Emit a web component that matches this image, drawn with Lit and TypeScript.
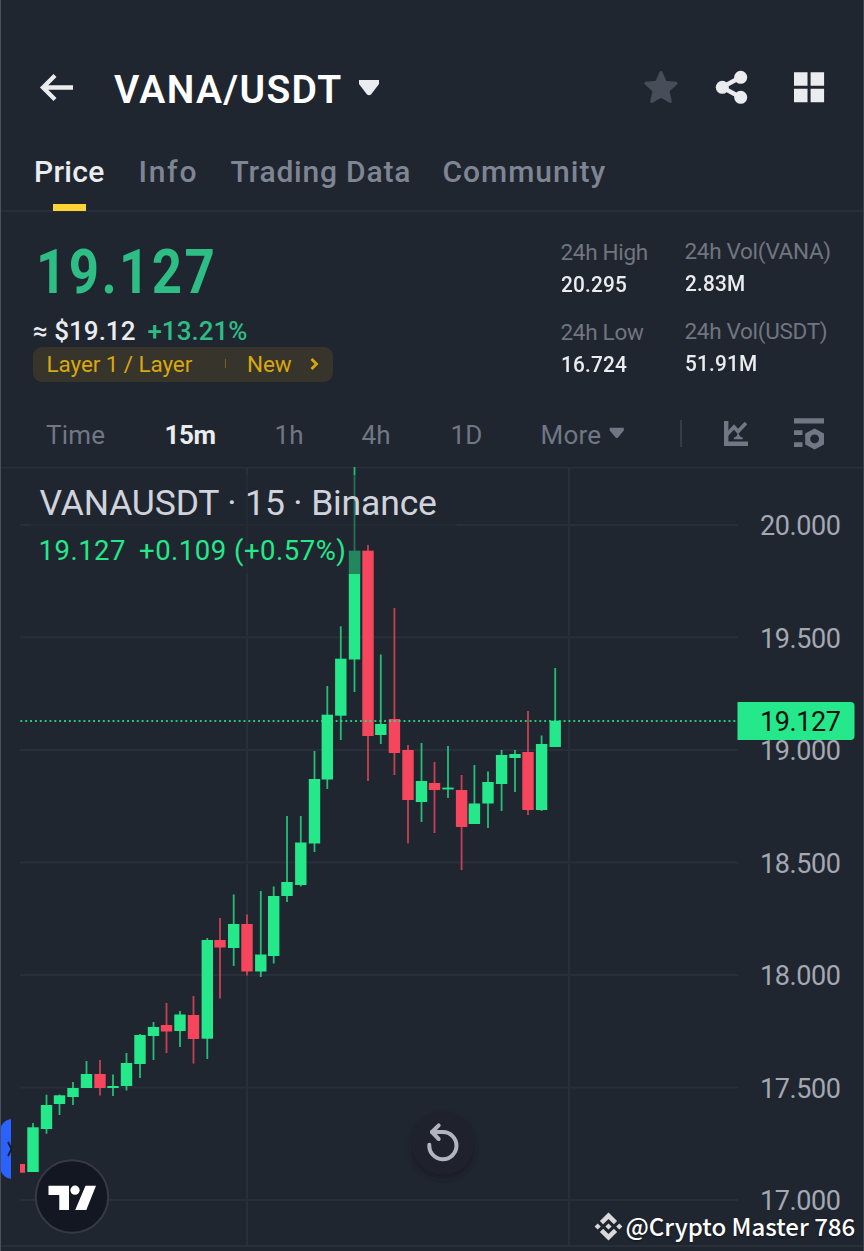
import { LitElement, html, svg, css } from "lit";
import { customElement } from "lit/decorators.js";

type Candle = [x: number, high: number, top: number, bottom: number, low: number, up: 0 | 1];

const CANDLES: Candle[] = [
  [33, 1123, 1127.3, 1172, 1172, 1],
  [46.5, 1094.7, 1105, 1129, 1133.7, 1],
  [59.5, 1094.5, 1095.3, 1104, 1115, 1],
  [73, 1082, 1088, 1097, 1105, 1],
  [86.5, 1061, 1074, 1088, 1088, 1],
  [100, 1060, 1074, 1088, 1095.5, 0],
  [113, 1074.5, 1086, 1088, 1096, 1],
  [126.5, 1053, 1063, 1086, 1090.5, 1],
  [140, 1034, 1035, 1064, 1078, 1],
  [153.5, 1022, 1027, 1036, 1060, 1],
  [166.5, 1003, 1025, 1031.5, 1053, 0],
  [180, 1011, 1014.5, 1031, 1047, 1],
  [193.5, 996, 1015, 1039, 1063.5, 0],
  [207.3, 938, 940, 1038.7, 1059, 1],
  [220, 918, 940, 947.5, 998.5, 0],
  [233.7, 894.5, 924, 948, 966, 1],
  [247, 914.5, 924, 971.5, 975.5, 0],
  [260.8, 891, 954.5, 971.5, 977, 1],
  [273.7, 886.5, 896, 956, 963.5, 1],
  [287, 816, 882, 896, 902, 1],
  [300.8, 816, 842.5, 885, 886.5, 1],
  [314.5, 751, 779, 843.5, 852, 1],
  [327.3, 686, 714.7, 779.5, 789, 1],
  [340.8, 626.3, 658.7, 715.7, 740, 1],
  [354.5, 466, 550.7, 659.5, 692, 1],
  [368, 545, 550.7, 736, 781, 0],
  [380.8, 654.5, 724, 735, 744, 1],
  [394.4, 608, 719, 753, 775, 0],
  [408, 745, 750, 800, 843.5, 0],
  [421.5, 743, 781, 802, 822, 1],
  [434.5, 762, 783, 790, 833, 0],
  [448, 746, 787.6, 789.4, 798, 1],
  [461.6, 775, 790, 827, 870, 0],
  [474.4, 765, 803.5, 824, 824, 1],
  [488, 771.5, 782, 803.5, 828, 1],
  [501.6, 750, 755, 784, 811, 1],
  [515, 750, 754, 758, 792, 1],
  [528, 711, 752, 810, 815, 0],
  [541.6, 735.5, 744, 810, 811, 1],
  [555.2, 668, 720.7, 747, 747, 1],
];

const LEVELS: [string, number][] = [
  ["20.000", 525],
  ["19.500", 637.3],
  ["19.000", 750],
  ["18.500", 862.5],
  ["18.000", 975],
  ["17.500", 1087.5],
  ["17.000", 1200],
];

const UP = "#25e88a";
const DOWN = "#f6465d";

@customElement("price-chart")
export class PriceChart extends LitElement {
  static styles = css`
    :host { display: block; position: relative; height: 784px; font-family: Roboto, sans-serif; }
    .plot { display: block; }
    .grid { stroke: #292f39; stroke-width: 2; }
    .axis { font-size: 27px; fill: #a5a8b3; }
    .last { font-size: 27px; fill: #0b1210; }
    .legend { position: absolute; left: 30px; top: 8px; }
    .veil { background: rgba(32, 38, 48, 0.5); white-space: pre; width: max-content; }
    .name { height: 57px; line-height: 56px; font-size: 35.5px; color: #d1d3dc; padding: 0 20px 0 9.5px; letter-spacing: -0.15px; }
    .veil.vals { height: 42px; line-height: 38px; font-size: 27.5px; color: #25e88a; width: 321px; padding-left: 8.5px; display: flex; gap: 13px; letter-spacing: 0.5px; }
    .drawer { position: absolute; left: 0; top: 652px; }
    .tv { position: absolute; left: 34px; top: 692px; }
    .reset { position: absolute; left: 403px; top: 637px; }
  `;

  private candle([x, high, top, bottom, low, up]: Candle) {
    const c = up ? UP : DOWN;
    return svg`
      <rect x=${x - 0.9} y=${high} width="1.8" height=${low - high} fill=${c} opacity="0.78"/>
      <rect x=${x - 5.7} y=${top} width="11.4" height=${bottom - top} fill=${c}/>`;
  }

  render() {
    return html`
      <svg class="plot" width="864" height="784" viewBox="0 467 864 784">
        <path class="grid" d="M0 467.5H864M0 1246H864M247 467V1245M569 467V1245"/>
        ${LEVELS.map(([, y]) => svg`<path class="grid" d="M20 ${y}H738"/>`)}
        <rect x="20" y="1164" width="5" height="8.7" fill=${DOWN}/>
        ${CANDLES.map((c) => this.candle(c))}
        <path d="M20.4 721H738" stroke=${UP} stroke-width="1.8" stroke-dasharray="1.9 2.95" opacity="0.85"/>
        ${LEVELS.map(([t, y]) => svg`<text class="axis" x="760" y=${y + 10.2} textLength="81">${t}</text>`)}
        <path d="M737.5 702H850.5a4 4 0 0 1 4 4V736a4 4 0 0 1-4 4H737.5Z" fill=${UP}/>
        <text class="last" x="760" y="731" textLength="81">19.127</text>
      </svg>
      <div class="legend">
        <div class="veil name">VANAUSDT · 15 · Binance</div>
        <div class="veil vals"><span>19.127</span><span>+0.109 (+0.57%)</span></div>
      </div>
      <svg class="drawer" width="12" height="60" viewBox="0 0 12 60">
        <path d="M11 0V60Q3 59 0 50V10Q3 1 11 0Z" fill="#2962ff"/>
        <path d="M8 23l3.5 7L8 37" fill="none" stroke="#151a22" stroke-width="1.8"/>
      </svg>
      <svg class="tv" width="76" height="76" viewBox="34 1159 76 76">
        <circle cx="72" cy="1196.5" r="36.2" fill="#131722" stroke="#363a45" stroke-width="2"/>
        <path d="M48.5 1185.7H69V1210H59.3V1195H48.5ZM85.5 1185.7H96L86.3 1210H75.2Z" fill="#fff"/>
        <circle cx="75" cy="1190.2" r="4.6" fill="#fff"/>
      </svg>
      <svg class="reset" width="80" height="84" viewBox="403 1104 80 84">
        <defs>
          <filter id="soft" x="-30%" y="-30%" width="160%" height="160%"><feGaussianBlur stdDeviation="2.5"/></filter>
        </defs>
        <circle cx="443" cy="1147" r="32" fill="#161920" opacity="0.6" filter="url(#soft)"/>
        <circle cx="443" cy="1143.5" r="31.5" fill="#1f222d"/>
        <path d="M429.3 1144.8A13.6 13.6 0 1 0 442.8 1132H432" fill="none" stroke="#b2b5be" stroke-width="4" stroke-linecap="round"/>
        <path d="M438.7 1125.3L432 1132L438.7 1139" fill="none" stroke="#b2b5be" stroke-width="4" stroke-linecap="round" stroke-linejoin="round"/>
      </svg>
    `;
  }
}

@customElement("app-root")
export class AppRoot extends LitElement {
  static styles = css`
    :host {
      display: block; position: relative; box-sizing: border-box; width: 864px; height: 1251px;
      overflow: hidden; background: #202630; color: #eaecef; font-family: Roboto, sans-serif;
    }
    .edge { position: absolute; inset: 0; border-left: 1px solid #4b515c; border-right: 1px solid #3c424d; pointer-events: none; }
    .top { display: flex; align-items: center; padding: 33px 39px 0 38px; height: 113px; }
    .back { margin: -4px 39px 0 1px; }
    .pair { font-size: 39px; font-weight: 600; color: #fff; letter-spacing: 1.35px; width: 244px; padding-top: 1px; }
    .caret { margin-top: -3px; }
    .actions { display: flex; align-items: center; margin: -5px 0 0 auto; }
    .star { margin-right: 37px; }
    .share { margin-right: 36px; }
    .top svg { display: block; }
    .tabs {
      display: grid; grid-template-columns: 104.5px 92px 212px auto; height: 65px; margin-top: -1px; padding-left: 34px;
      border-bottom: 2px solid #282e39; font-size: 30px; font-weight: 500; color: #7f8593; letter-spacing: 0.8px;
    }
    .tab { line-height: 54px; }
    .info { letter-spacing: 1.7px; }
    .community { letter-spacing: 1px; }
    .on { color: #eaecef; }
    .tab.on { display: grid; grid-template-rows: 59px 7px; letter-spacing: 0.3px; }
    .bar { width: 33px; background: #fcd535; margin-left: 19px; }
    .summary { display: grid; grid-template-columns: 526.5px 124px auto; height: 193px; padding-left: 34px; }
    .big { font-size: 61px; font-weight: 700; line-height: 80px; color: #2ebd85; letter-spacing: 2.8px; margin: 20px 0 0 1.5px; transform: scaleX(0.865); transform-origin: 0 0; }
    .approx { display: flex; gap: 12px; font-size: 26px; line-height: 30px; font-weight: 500; margin: 4px 0 0 -1px; letter-spacing: 0; }
    .up { color: #2ebd85; }
    .tag {
      display: grid; grid-template-columns: 178px 22.5px 62.5px auto; align-items: center; width: 300px; height: 35px; margin: 1px 0 0 -1px; padding-left: 13.5px;
      box-sizing: border-box; border-radius: 9px; background: #37342c; color: #d9a70e; font-size: 22.5px; letter-spacing: -0.1px;
    }
    .tag > * { margin-top: -2px; }
    .sep { width: 1px; height: 9px; background: #75601e; }
    .stat { font-size: 22.5px; line-height: 31px; height: 31px; color: #70757f; letter-spacing: -0.3px; }
    .val { color: #eaecef; font-weight: 500; margin: 1px 0 17px; letter-spacing: 0.2px; transform: scaleX(0.925); transform-origin: 0 0; }
    .col { padding-top: 25px; }
    .col2 { padding-top: 24px; }
    .frames {
      display: grid; grid-template-columns: 118.5px 110px 87px 89px 90px 68px 71px 43px 70px auto; align-items: center;
      height: 62px; padding-left: 46px; font-size: 26px; color: #717784; letter-spacing: 0.2px;
    }
    .frames > * { margin-top: -3px; }
    .frames .on { font-weight: 700; letter-spacing: -0.4px; margin-top: -2px; }
    .frames .down { margin-top: -6px; }
    .frames .rule { width: 2px; height: 27px; background: #363c47; margin-top: -6px; }
    .frames .tool { margin-top: -4px; }
    .mark { position: absolute; left: 593.5px; top: 1209px; display: flex; align-items: center; gap: 3px; color: #fff; font: 500 24px/34px "Noto Sans CJK SC", sans-serif; white-space: nowrap; text-shadow: 0 1px 2px rgba(0,0,0,.5); }
  `;

  render() {
    return html`
      <div class="top">
        <svg class="back" width="36" height="30" viewBox="38 73 36 30">
          <path d="M72 87.5H43M54 75.5L42 87.5L54 99.5" fill="none" stroke="#eaecef" stroke-width="4.3"/>
        </svg>
        <div class="pair">VANA/USDT</div>
        <svg class="caret" width="22" height="18" viewBox="358 79 22 18"><path d="M359 80H379V84L371 94.5Q369 96 367 94.5L359 84Z" fill="#eaecef"/></svg>
        <div class="actions">
          <svg class="star" width="34" height="34" viewBox="644 70 34 34">
            <path d="M661 72.5L665.2 82.2L676 83.3L668 90.7L670.3 101.5L661 96.2L651.7 101.5L654 90.7L646 83.3L656.8 82.2Z" fill="#474d59" stroke="#474d59" stroke-width="3" stroke-linejoin="round"/>
          </svg>
          <svg class="share" width="34" height="34" viewBox="715 70 34 34">
            <path d="M741 77L722 87.3L741 97.5" fill="none" stroke="#eaecef" stroke-width="4.4"/>
            <circle cx="740.7" cy="77.3" r="6.5" fill="#eaecef"/><circle cx="722.3" cy="87.3" r="6.5" fill="#eaecef"/><circle cx="740.7" cy="97.3" r="6.5" fill="#eaecef"/>
          </svg>
          <svg width="40" height="34" viewBox="785 70 40 34"><path d="M794 72.3h13.5v13.4H794ZM810.6 72.3h13.5v13.4h-13.5ZM794 88.8h13.5v13.5H794ZM810.6 88.8h13.5v13.5h-13.5Z" fill="#eaecef"/></svg>
        </div>
      </div>
      <div class="tabs">
        <div class="tab on">Price<span class="bar"></span></div>
        <div class="tab info">Info</div>
        <div class="tab">Trading Data</div>
        <div class="tab community">Community</div>
      </div>
      <div class="summary">
        <div>
          <div class="big">19.127</div>
          <div class="approx"><span>≈ $19.12</span><span class="up">+13.21%</span></div>
          <div class="tag">
            <span>Layer 1 / Layer</span><i class="sep"></i><span>New</span>
            <svg width="10" height="14" viewBox="0 0 10 14"><path d="M1.5 2L6.5 7L1.5 12" fill="none" stroke="#d9a70e" stroke-width="2.8"/></svg>
          </div>
        </div>
        <div class="col">
          <div class="stat">24h High</div><div class="stat val">20.295</div>
          <div class="stat">24h Low</div><div class="stat val">16.724</div>
        </div>
        <div class="col2">
          <div class="stat">24h Vol(VANA)</div><div class="stat val">2.83M</div>
          <div class="stat">24h Vol(USDT)</div><div class="stat val">51.91M</div>
        </div>
      </div>
      <div class="frames">
        <span>Time</span><span class="on">15m</span><span>1h</span><span>4h</span><span>1D</span><span>More</span>
        <svg class="down" width="16" height="12" viewBox="609 426 16 12"><path d="M609.7 426.7H623.8V429.5L618 436.5Q616.8 437.6 615.6 436.5L609.7 429.5Z" fill="#717784"/></svg>
        <i class="rule"></i>
        <svg class="tool" width="26" height="28" viewBox="723 419 26 28">
          <path d="M726.2 420V442.8H748" fill="none" stroke="#717784" stroke-width="4.4"/>
          <path d="M727 433.5L734 426L738 430.5L746 422" fill="none" stroke="#717784" stroke-width="3.6"/>
          <path d="M738 432l2.2 3.6 2.6 1.2v1.4h-9v-1.4l2.6-1.2Z" fill="#717784"/>
        </svg>
        <svg class="tool" width="32" height="34" viewBox="793 417 32 34">
          <path d="M794 418.3h30v5.2H794ZM794 430.2h8.5v4.7H794ZM794 442.2h8.5v4.7H794Z" fill="#717784"/>
          <path fill-rule="evenodd" d="M814.6 428.4L824 433.6V444.4L814.6 449.6L805.2 444.4V433.6ZM814.6 434.5a4.4 4.4 0 1 0 .01 0Z" fill="#717784"/>
        </svg>
      </div>
      <price-chart></price-chart>
      <div class="edge"></div>
      <div class="mark">
        <svg width="29" height="29" viewBox="-14.5 -14.5 29 29" fill="#d9d9db">
          <path d="M0-14L8.6-5.4L5.4-2.2L0-7.6L-5.4-2.2L-8.6-5.4ZM0 14L8.6 5.4L5.4 2.2L0 7.6L-5.4 2.2L-8.6 5.4ZM0-3.1L3.1 0L0 3.1L-3.1 0ZM-10.8-3.1L-7.7 0L-10.8 3.1L-13.9 0ZM10.8-3.1L13.9 0L10.8 3.1L7.7 0Z"/>
        </svg>
        <span>@Crypto Master 786</span>
      </div>
    `;
  }
}
